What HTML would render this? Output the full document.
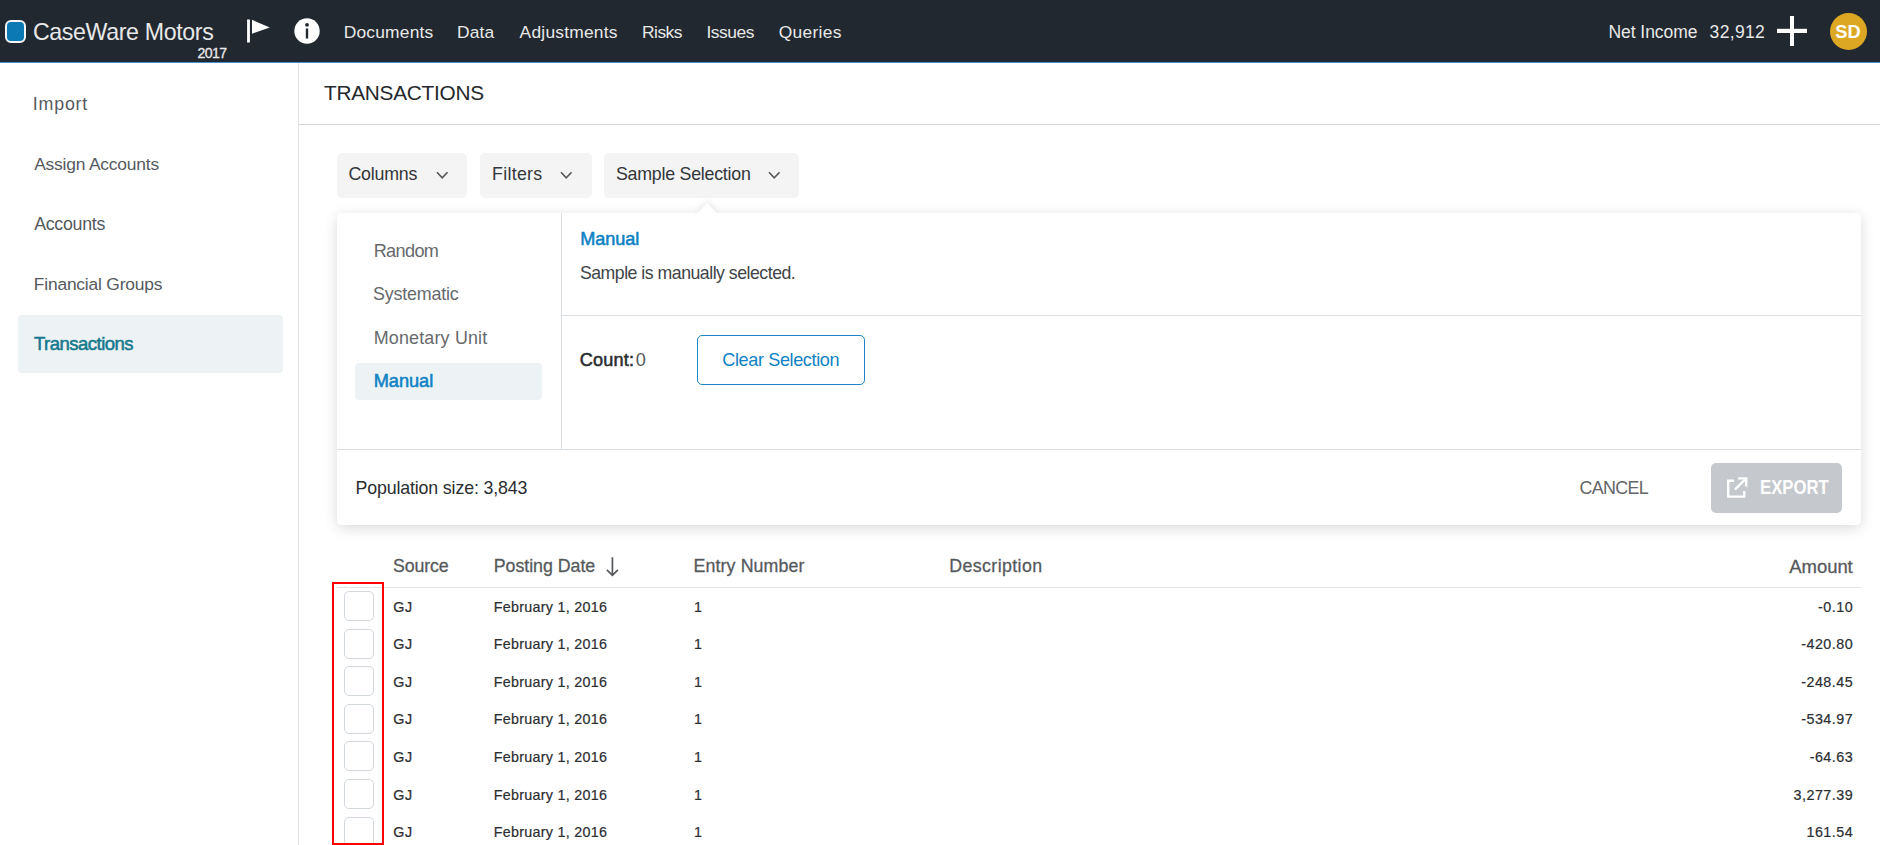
<!DOCTYPE html>
<html><head><meta charset="utf-8">
<style>
*{box-sizing:border-box;margin:0;padding:0}
html,body{width:1880px;height:845px;overflow:hidden;background:#fff;font-family:"Liberation Sans",sans-serif;}
.a{position:absolute;white-space:nowrap;line-height:1}
.cb{position:absolute;left:344px;width:30px;height:30px;border:1px solid #d3d8de;border-radius:5px;background:#fff}
</style></head><body>
<div class="a" style="left:0;top:0;width:1880px;height:62px;background:#222830"></div>
<div class="a" style="left:0;top:62px;width:1880px;height:1px;background:#4a90d0"></div>
<div class="a" style="left:4.5px;top:20px;width:21px;height:22.5px;border:2.6px solid #f4f4f4;border-radius:6px;background:#0a79b4"></div>
<div class="a" style="left:32.9px;top:20.9px;font-size:23.2px;letter-spacing:-0.364px;color:#e8e8e8;">CaseWare Motors</div><div class="a" style="left:197.6px;top:45.9px;font-size:14.1px;letter-spacing:-0.633px;color:#e8e8e8;-webkit-text-stroke:0.3px #e8e8e8;">2017</div>
<svg class="a" style="left:246px;top:19px" width="26" height="25" viewBox="0 0 26 25">
  <rect x="1.1" y="0.5" width="2.8" height="23" fill="#fff"/>
  <path d="M6 0.8 L23.8 8.4 L6 14.8 Z" fill="#fff"/>
</svg>
<svg class="a" style="left:293px;top:17px" width="28" height="28" viewBox="0 0 28 28">
  <circle cx="14" cy="14" r="12.7" fill="#fff"/>
  <circle cx="14" cy="7.8" r="1.9" fill="#222830"/>
  <rect x="12.8" y="11.5" width="2.4" height="10" fill="#222830"/>
</svg>
<div class="a" style="left:343.7px;top:23.5px;font-size:17.4px;letter-spacing:0.2px;color:#e8e8e8;">Documents</div><div class="a" style="left:456.9px;top:23.5px;font-size:17.4px;letter-spacing:0.2px;color:#e8e8e8;">Data</div><div class="a" style="left:519.6px;top:23.5px;font-size:17.4px;letter-spacing:0.22px;color:#e8e8e8;">Adjustments</div><div class="a" style="left:642.1px;top:23.5px;font-size:17.4px;letter-spacing:-0.55px;color:#e8e8e8;">Risks</div><div class="a" style="left:706.4px;top:23.5px;font-size:17.4px;letter-spacing:-0.42px;color:#e8e8e8;">Issues</div><div class="a" style="left:778.8px;top:23.5px;font-size:17.4px;letter-spacing:0.283px;color:#e8e8e8;">Queries</div><div class="a" style="left:1608.4px;top:23.8px;font-size:17.5px;letter-spacing:-0.044px;color:#e8e8e8;">Net Income</div><div class="a" style="left:1709.6px;top:23.8px;font-size:17.5px;letter-spacing:0.34px;color:#e8e8e8;">32,912</div>
<svg class="a" style="left:1777px;top:16px" width="30" height="30" viewBox="0 0 30 30">
  <rect x="13" y="0" width="4" height="30" fill="#fff"/>
  <rect x="0" y="12.8" width="30" height="4.2" fill="#fff"/>
</svg>
<div class="a" style="left:1830px;top:12.8px;width:37px;height:37px;border-radius:50%;background:#dca824"></div>
<div class="a" style="left:1835.2px;top:22.5px;font-size:18.2px;letter-spacing:0.1px;color:#ffffff;font-weight:700;">SD</div>

<div class="a" style="left:298px;top:63px;width:1px;height:782px;background:#e1e3e6"></div>
<div class="a" style="left:32.8px;top:95.9px;font-size:17.8px;letter-spacing:0.82px;color:#55595e;">Import</div><div class="a" style="left:34.2px;top:155.7px;font-size:17.4px;letter-spacing:-0.193px;color:#55595e;">Assign Accounts</div><div class="a" style="left:34.2px;top:216.0px;font-size:17.8px;letter-spacing:-0.286px;color:#55595e;">Accounts</div><div class="a" style="left:33.8px;top:275.7px;font-size:17.4px;letter-spacing:-0.187px;color:#55595e;">Financial Groups</div>
<div class="a" style="left:18px;top:315px;width:265px;height:58px;background:#edf3f5;border-radius:4px"></div>
<div class="a" style="left:33.9px;top:334.6px;font-size:18.5px;letter-spacing:-0.5px;color:#16798f;-webkit-text-stroke:0.55px #16798f;">Transactions</div>

<div class="a" style="left:324.1px;top:83.4px;font-size:20.8px;letter-spacing:-0.273px;color:#25282c;">TRANSACTIONS</div>
<div class="a" style="left:299px;top:124px;width:1581px;height:1px;background:#d4d6d9"></div>

<div class="a" style="left:337px;top:153px;width:130px;height:45px;background:#f4f4f4;border-radius:5px"></div>
<div class="a" style="left:480px;top:153px;width:112px;height:45px;background:#f4f4f4;border-radius:5px"></div>
<div class="a" style="left:604px;top:153px;width:195px;height:45px;background:#f4f4f4;border-radius:5px"></div>
<div class="a" style="left:348.4px;top:166.4px;font-size:17.8px;letter-spacing:-0.2px;color:#33363a;">Columns</div><div class="a" style="left:492.0px;top:166.4px;font-size:17.8px;letter-spacing:0.3px;color:#33363a;">Filters</div><div class="a" style="left:616.0px;top:166.4px;font-size:17.8px;letter-spacing:-0.24px;color:#33363a;">Sample Selection</div>
<svg class="a" style="left:436px;top:171px" width="13" height="9" viewBox="0 0 13 9"><path d="M1 1.2 L6.2 6.8 L11.6 1.2" fill="none" stroke="#55585b" stroke-width="1.65"/></svg>
<svg class="a" style="left:560px;top:171px" width="13" height="9" viewBox="0 0 13 9"><path d="M1 1.2 L6.2 6.8 L11.6 1.2" fill="none" stroke="#55585b" stroke-width="1.65"/></svg>
<svg class="a" style="left:768px;top:171px" width="13" height="9" viewBox="0 0 13 9"><path d="M1 1.2 L6.2 6.8 L11.6 1.2" fill="none" stroke="#55585b" stroke-width="1.65"/></svg>

<div class="a" style="left:337px;top:213px;width:1524px;height:312px;background:#fff;border-radius:5px;box-shadow:0 3px 14px rgba(0,0,0,0.15)"></div>
<div class="a" style="left:700.4px;top:206px;width:14.2px;height:14.2px;background:#fff;transform:rotate(45deg);box-shadow:-2px -2px 6px rgba(0,0,0,0.08)"></div>
<div class="a" style="left:337px;top:213px;width:1524px;height:312px;background:#fff;border-radius:5px"></div>
<div class="a" style="left:561px;top:213px;width:1px;height:236px;background:#d9dee3"></div>
<div class="a" style="left:562px;top:315px;width:1299px;height:1px;background:#d9dee3"></div>
<div class="a" style="left:337px;top:449px;width:1524px;height:1px;background:#d9dee3"></div>
<div class="a" style="left:373.7px;top:242.0px;font-size:18.1px;letter-spacing:-0.64px;color:#66696c;">Random</div><div class="a" style="left:373.0px;top:286.0px;font-size:17.9px;letter-spacing:-0.2px;color:#66696c;">Systematic</div><div class="a" style="left:373.7px;top:330.2px;font-size:17.9px;letter-spacing:0.183px;color:#66696c;">Monetary Unit</div>
<div class="a" style="left:355px;top:363px;width:187px;height:37px;background:#edf3f5;border-radius:4px"></div>
<div class="a" style="left:373.7px;top:372.3px;font-size:18.2px;letter-spacing:-0.02px;color:#0f82c5;-webkit-text-stroke:0.55px #0f82c5;">Manual</div><div class="a" style="left:580.2px;top:229.6px;font-size:18.1px;letter-spacing:-0.06px;color:#0f82c5;-webkit-text-stroke:0.55px #0f82c5;">Manual</div><div class="a" style="left:579.9px;top:265.1px;font-size:17.7px;letter-spacing:-0.489px;color:#404347;">Sample is manually selected.</div><div class="a" style="left:579.7px;top:350.6px;font-size:18.1px;letter-spacing:0.2px;color:#2a2d30;-webkit-text-stroke:0.55px #2a2d30;">Count:</div><div class="a" style="left:635.8px;top:350.6px;font-size:18.1px;letter-spacing:0px;color:#55585b;">0</div>
<div class="a" style="left:697px;top:335px;width:168px;height:50px;border:1.3px solid #1b86c6;border-radius:5px"></div>
<div class="a" style="left:722.3px;top:351.0px;font-size:18.1px;letter-spacing:-0.393px;color:#0f82c5;">Clear Selection</div><div class="a" style="left:355.5px;top:479.6px;font-size:17.8px;letter-spacing:-0.148px;color:#2a2d30;">Population size: 3,843</div><div class="a" style="left:1579.5px;top:479.9px;font-size:17.9px;letter-spacing:-0.7px;color:#636669;">CANCEL</div>
<div class="a" style="left:1711px;top:463px;width:131px;height:50px;background:#c5c9cd;border-radius:5px"></div>
<svg class="a" style="left:1726px;top:476px" width="23" height="23" viewBox="0 0 23 23">
  <path d="M8 4.8 H2.2 V20.6 H18.2 V15" fill="none" stroke="#fff" stroke-width="2.4"/>
  <path d="M9 13.6 L20.5 2" fill="none" stroke="#fff" stroke-width="2.4"/>
  <path d="M12.2 2.4 H20.2 V10.6" fill="none" stroke="#fff" stroke-width="2.4"/>
</svg>
<div class="a" style="left:1759.7px;top:477.1px;font-size:20.1px;letter-spacing:0px;color:#ffffff;font-weight:700;transform:scaleX(0.8309);transform-origin:0 0;">EXPORT</div>

<div class="a" style="left:393.0px;top:558.4px;font-size:17.8px;letter-spacing:-0.16px;color:#56595c;-webkit-text-stroke:0.28px #56595c;">Source</div><div class="a" style="left:493.7px;top:558.4px;font-size:17.8px;letter-spacing:-0.027px;color:#56595c;-webkit-text-stroke:0.28px #56595c;">Posting Date</div><div class="a" style="left:693.6px;top:558.4px;font-size:17.8px;letter-spacing:0.1px;color:#56595c;-webkit-text-stroke:0.28px #56595c;">Entry Number</div><div class="a" style="left:949.3px;top:558.4px;font-size:17.8px;letter-spacing:0.38px;color:#56595c;-webkit-text-stroke:0.28px #56595c;">Description</div><div class="a" style="left:1789.3px;top:557.5px;font-size:18.5px;letter-spacing:-0.06px;color:#56595c;-webkit-text-stroke:0.28px #56595c;">Amount</div>
<svg class="a" style="left:605px;top:557px" width="15" height="20" viewBox="0 0 15 20"><path d="M7.4 0.3 V18.3 M1.9 12.9 L7.4 18.3 L12.9 12.9" fill="none" stroke="#56595c" stroke-width="1.7"/></svg>
<div class="a" style="left:337px;top:587px;width:1524px;height:1px;background:#e2e4e7"></div>
<div class="cb" style="top:591.0px"></div><div class="a" style="left:393.3px;top:599.6px;font-size:14.3px;letter-spacing:0.6px;color:#2b2e31;-webkit-text-stroke:0.2px #2b2e31;">GJ</div><div class="a" style="left:493.7px;top:599.6px;font-size:14.3px;letter-spacing:0.287px;color:#2b2e31;-webkit-text-stroke:0.2px #2b2e31;">February 1, 2016</div><div class="a" style="left:693.9px;top:599.6px;font-size:14.3px;letter-spacing:0px;color:#2b2e31;-webkit-text-stroke:0.2px #2b2e31;">1</div><div class="a" style="right:26.9px;top:599.6px;font-size:14.3px;letter-spacing:0.486px;color:#2b2e31;-webkit-text-stroke:0.2px #2b2e31;">-0.10</div><div class="cb" style="top:628.6px"></div><div class="a" style="left:393.3px;top:637.2px;font-size:14.3px;letter-spacing:0.6px;color:#2b2e31;-webkit-text-stroke:0.2px #2b2e31;">GJ</div><div class="a" style="left:493.7px;top:637.2px;font-size:14.3px;letter-spacing:0.287px;color:#2b2e31;-webkit-text-stroke:0.2px #2b2e31;">February 1, 2016</div><div class="a" style="left:693.9px;top:637.2px;font-size:14.3px;letter-spacing:0px;color:#2b2e31;-webkit-text-stroke:0.2px #2b2e31;">1</div><div class="a" style="right:26.9px;top:637.2px;font-size:14.3px;letter-spacing:0.486px;color:#2b2e31;-webkit-text-stroke:0.2px #2b2e31;">-420.80</div><div class="cb" style="top:666.2px"></div><div class="a" style="left:393.3px;top:674.8px;font-size:14.3px;letter-spacing:0.6px;color:#2b2e31;-webkit-text-stroke:0.2px #2b2e31;">GJ</div><div class="a" style="left:493.7px;top:674.8px;font-size:14.3px;letter-spacing:0.287px;color:#2b2e31;-webkit-text-stroke:0.2px #2b2e31;">February 1, 2016</div><div class="a" style="left:693.9px;top:674.8px;font-size:14.3px;letter-spacing:0px;color:#2b2e31;-webkit-text-stroke:0.2px #2b2e31;">1</div><div class="a" style="right:26.9px;top:674.8px;font-size:14.3px;letter-spacing:0.486px;color:#2b2e31;-webkit-text-stroke:0.2px #2b2e31;">-248.45</div><div class="cb" style="top:703.8px"></div><div class="a" style="left:393.3px;top:712.4px;font-size:14.3px;letter-spacing:0.6px;color:#2b2e31;-webkit-text-stroke:0.2px #2b2e31;">GJ</div><div class="a" style="left:493.7px;top:712.4px;font-size:14.3px;letter-spacing:0.287px;color:#2b2e31;-webkit-text-stroke:0.2px #2b2e31;">February 1, 2016</div><div class="a" style="left:693.9px;top:712.4px;font-size:14.3px;letter-spacing:0px;color:#2b2e31;-webkit-text-stroke:0.2px #2b2e31;">1</div><div class="a" style="right:26.9px;top:712.4px;font-size:14.3px;letter-spacing:0.486px;color:#2b2e31;-webkit-text-stroke:0.2px #2b2e31;">-534.97</div><div class="cb" style="top:741.4px"></div><div class="a" style="left:393.3px;top:750.0px;font-size:14.3px;letter-spacing:0.6px;color:#2b2e31;-webkit-text-stroke:0.2px #2b2e31;">GJ</div><div class="a" style="left:493.7px;top:750.0px;font-size:14.3px;letter-spacing:0.287px;color:#2b2e31;-webkit-text-stroke:0.2px #2b2e31;">February 1, 2016</div><div class="a" style="left:693.9px;top:750.0px;font-size:14.3px;letter-spacing:0px;color:#2b2e31;-webkit-text-stroke:0.2px #2b2e31;">1</div><div class="a" style="right:26.9px;top:750.0px;font-size:14.3px;letter-spacing:0.486px;color:#2b2e31;-webkit-text-stroke:0.2px #2b2e31;">-64.63</div><div class="cb" style="top:779.0px"></div><div class="a" style="left:393.3px;top:787.6px;font-size:14.3px;letter-spacing:0.6px;color:#2b2e31;-webkit-text-stroke:0.2px #2b2e31;">GJ</div><div class="a" style="left:493.7px;top:787.6px;font-size:14.3px;letter-spacing:0.287px;color:#2b2e31;-webkit-text-stroke:0.2px #2b2e31;">February 1, 2016</div><div class="a" style="left:693.9px;top:787.6px;font-size:14.3px;letter-spacing:0px;color:#2b2e31;-webkit-text-stroke:0.2px #2b2e31;">1</div><div class="a" style="right:26.9px;top:787.6px;font-size:14.3px;letter-spacing:0.486px;color:#2b2e31;-webkit-text-stroke:0.2px #2b2e31;">3,277.39</div><div class="cb" style="top:816.6px"></div><div class="a" style="left:393.3px;top:825.2px;font-size:14.3px;letter-spacing:0.6px;color:#2b2e31;-webkit-text-stroke:0.2px #2b2e31;">GJ</div><div class="a" style="left:493.7px;top:825.2px;font-size:14.3px;letter-spacing:0.287px;color:#2b2e31;-webkit-text-stroke:0.2px #2b2e31;">February 1, 2016</div><div class="a" style="left:693.9px;top:825.2px;font-size:14.3px;letter-spacing:0px;color:#2b2e31;-webkit-text-stroke:0.2px #2b2e31;">1</div><div class="a" style="right:26.9px;top:825.2px;font-size:14.3px;letter-spacing:0.486px;color:#2b2e31;-webkit-text-stroke:0.2px #2b2e31;">161.54</div>
<div class="a" style="left:332px;top:582px;width:52px;height:263px;border:2px solid #f00"></div>
</body></html>
